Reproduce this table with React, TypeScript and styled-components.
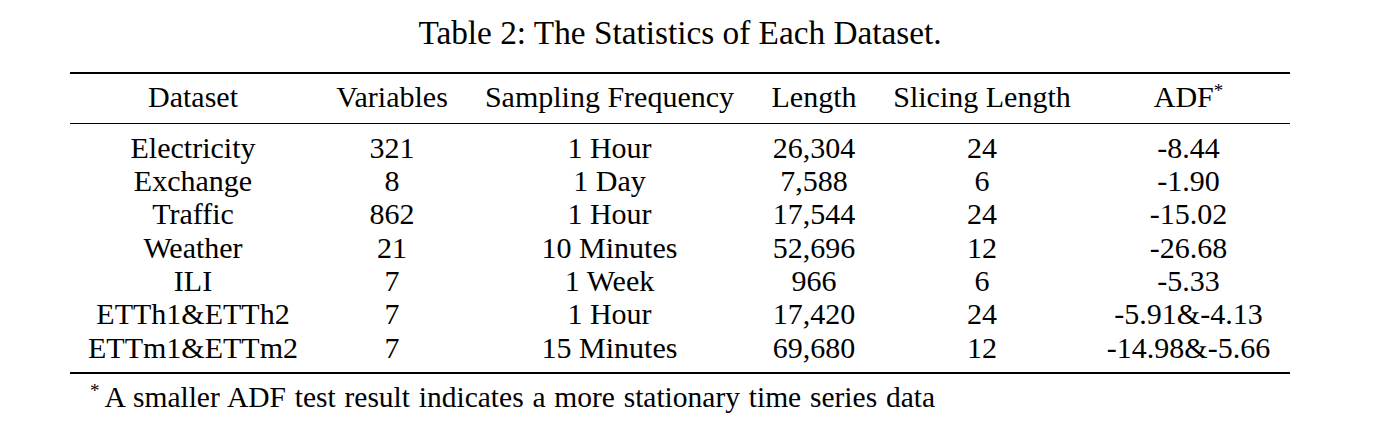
import React from "react";
import styled, { createGlobalStyle } from "styled-components";

const GlobalStyle = createGlobalStyle`
  html, body {
    margin: 0;
    padding: 0;
    background: #ffffff;
  }
  body {
    font-family: "Liberation Serif", "Times New Roman", serif;
    color: #000;
  }
`;

const Page = styled.div`
  width: 1374px;
  height: 434px;
  padding-left: 70px;
  box-sizing: border-box;
  overflow: hidden;
`;

const Figure = styled.div`
  width: 1220px;
  display: flex;
  flex-direction: column;
`;

const Caption = styled.div`
  font-size: 33.3px;
  line-height: 38px;
  text-align: center;
  padding-top: 14px;
  margin-bottom: 20px;
`;

const Table = styled.table`
  width: 1220px;
  border-collapse: collapse;
  table-layout: fixed;
  font-size: 30px;
  line-height: 33.3px;
  border-top: 2px solid #000;
  border-bottom: 2px solid #000;
`;

const HeadCell = styled.th`
  font-weight: normal;
  text-align: center;
  white-space: nowrap;
  padding: 6px 0 9.5px;
  border-bottom: 1px solid #000;
`;

const Cell = styled.td<{ $pos?: "first" | "last" }>`
  text-align: center;
  white-space: nowrap;
  padding: ${(p) =>
    p.$pos === "first" ? "7px 0 0" : p.$pos === "last" ? "0 0 8.5px" : "0"};
`;

const Star = styled.sup<{ $gap?: number }>`
  font-size: 19px;
  line-height: 0;
  vertical-align: 10px;
  margin-right: ${(p) => p.$gap ?? 0}px;
`;

const Footnote = styled.div`
  font-size: 29.5px;
  line-height: 33px;
  word-spacing: 1.4px;
  padding-left: 20px;
  margin-top: 6.5px;
`;

const columns = [246, 152, 283, 126, 210, 203];

const rows = [
  ["Electricity", "321", "1 Hour", "26,304", "24", "-8.44"],
  ["Exchange", "8", "1 Day", "7,588", "6", "-1.90"],
  ["Traffic", "862", "1 Hour", "17,544", "24", "-15.02"],
  ["Weather", "21", "10 Minutes", "52,696", "12", "-26.68"],
  ["ILI", "7", "1 Week", "966", "6", "-5.33"],
  ["ETTh1&ETTh2", "7", "1 Hour", "17,420", "24", "-5.91&-4.13"],
  ["ETTm1&ETTm2", "7", "15 Minutes", "69,680", "12", "-14.98&-5.66"],
];

export default function App() {
  return (
    <>
      <GlobalStyle />
      <Page>
        <Figure>
          <Caption>Table 2: The Statistics of Each Dataset.</Caption>
          <Table>
            <colgroup>
              {columns.map((w, i) => (
                <col key={i} style={{ width: w }} />
              ))}
            </colgroup>
            <thead>
              <tr>
                <HeadCell>Dataset</HeadCell>
                <HeadCell>Variables</HeadCell>
                <HeadCell>Sampling Frequency</HeadCell>
                <HeadCell>Length</HeadCell>
                <HeadCell>Slicing Length</HeadCell>
                <HeadCell>
                  ADF<Star>*</Star>
                </HeadCell>
              </tr>
            </thead>
            <tbody>
              {rows.map((r, i) => (
                <tr key={r[0]}>
                  {r.map((v, j) => (
                    <Cell
                      key={j}
                      $pos={i === 0 ? "first" : i === rows.length - 1 ? "last" : undefined}
                    >
                      {v}
                    </Cell>
                  ))}
                </tr>
              ))}
            </tbody>
          </Table>
          <Footnote>
            <Star $gap={5}>*</Star>A smaller ADF test result indicates a more stationary time series data
          </Footnote>
        </Figure>
      </Page>
    </>
  );
}
